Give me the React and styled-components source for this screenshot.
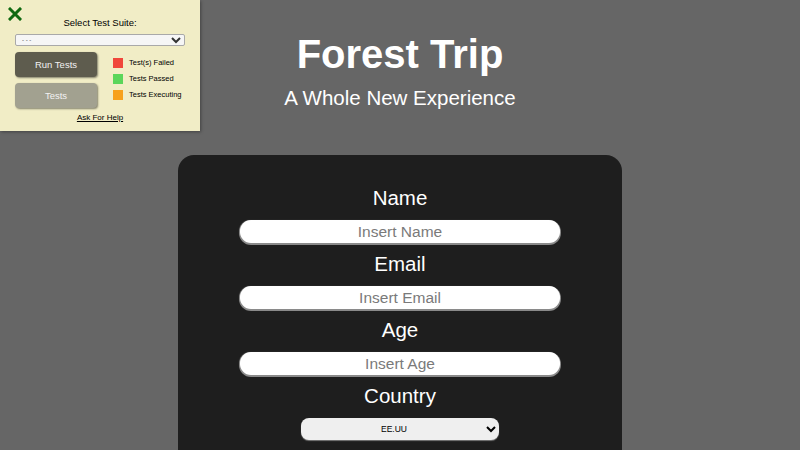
import React from 'react';
import styled, { createGlobalStyle } from 'styled-components';

const GlobalStyle = createGlobalStyle`
    html, body {
        margin: 0;
        padding: 0;
        background: #666666;
        font-family: "Liberation Sans", Arial, sans-serif;
    }
`

const fields = [
    { label: 'Name', placeholder: 'Insert Name' },
    { label: 'Email', placeholder: 'Insert Email' },
    { label: 'Age', placeholder: 'Insert Age' },
]

const legend = [
    { color: '#f0473b', text: 'Test(s) Failed' },
    { color: '#5bd65a', text: 'Tests Passed' },
    { color: '#f7a11c', text: 'Tests Executing' },
]

export default function App() {
    return (
        <Page>
            <GlobalStyle />
            <Header>
                <Title>Forest Trip</Title>
                <Subtitle>A Whole New Experience</Subtitle>
            </Header>

            <FormCard>
                {fields.map((f) => (
                    <Field key={f.label}>
                        <Label>{f.label}</Label>
                        <TextInput placeholder={f.placeholder} />
                    </Field>
                ))}
                <Field>
                    <Label>Country</Label>
                    <CountrySelect defaultValue="EE.UU">
                        <option>EE.UU</option>
                    </CountrySelect>
                </Field>
            </FormCard>

            <TestPanel>
                <CloseButton aria-label="close">
                    <svg width="14" height="14" viewBox="0 0 14 14">
                        <path d="M2 2 L12 12 M12 2 L2 12" stroke="#106a10" strokeWidth="3" strokeLinecap="square" />
                    </svg>
                </CloseButton>
                <PanelHeading>Select Test Suite:</PanelHeading>
                <SuiteSelect defaultValue="- - -">
                    <option>- - -</option>
                </SuiteSelect>
                <PanelBody>
                    <ButtonColumn>
                        <PanelButton dark>Run Tests</PanelButton>
                        <PanelButton>Tests</PanelButton>
                    </ButtonColumn>
                    <Legend>
                        {legend.map((l) => (
                            <LegendRow key={l.text}>
                                <Swatch color={l.color} />
                                {l.text}
                            </LegendRow>
                        ))}
                    </Legend>
                </PanelBody>
                <HelpLink href="#">Ask For Help</HelpLink>
            </TestPanel>
        </Page>
    )
}

const Page = styled.div`
    position: relative;
    height: 450px;
    overflow: hidden;
`

const Header = styled.header`
    display: flex;
    flex-direction: column;
    align-items: center;
    padding-top: 31px;
    color: #ffffff;
`

const Title = styled.h1`
    margin: 0;
    font-size: 40px;
    font-weight: bold;
    line-height: 46px;
`

const Subtitle = styled.p`
    margin: 9px 0 0;
    font-size: 20.5px;
    line-height: 23px;
`

const FormCard = styled.main`
    width: 444px;
    margin: 46px auto 0;
    box-sizing: border-box;
    padding: 31px 0 40px;
    background: #1e1e1e;
    border-radius: 16px;
    display: flex;
    flex-direction: column;
    align-items: center;
    gap: 9px;
`

const Field = styled.div`
    display: flex;
    flex-direction: column;
    align-items: center;
    gap: 11px;
`

const Label = styled.label`
    color: #ffffff;
    font-size: 20.5px;
    line-height: 23px;
`

const TextInput = styled.input`
    width: 320px;
    height: 23px;
    box-sizing: border-box;
    border: none;
    border-radius: 11px;
    background: #ffffff;
    box-shadow: 0 1px 0 1px #8a8a8a, -1px 0 1px #555;
    text-align: center;
    font-family: "Liberation Sans", Arial, sans-serif;
    font-size: 15.5px;
    color: #333;
    outline: none;

    &::placeholder {
        color: #7a7a7a;
    }
`

const CountrySelect = styled.select`
    width: 198px;
    height: 22px;
    border: none;
    border-radius: 8px;
    background: #efefef;
    box-shadow: 0 1px 1px #777;
    text-align: center;
    text-align-last: center;
    font-family: "Liberation Sans", Arial, sans-serif;
    font-size: 8.5px;
    color: #000;
`

const TestPanel = styled.aside`
    position: absolute;
    top: 0;
    left: 0;
    width: 200px;
    height: 131px;
    box-sizing: border-box;
    padding: 16px 15px 0 15px;
    background: #f1edc6;
    box-shadow: 1px 1px 3px rgba(0, 0, 0, 0.35);
    display: flex;
    flex-direction: column;
    font-family: "Liberation Sans", Arial, sans-serif;
    color: #000;
`

const CloseButton = styled.button`
    position: absolute;
    top: 7px;
    left: 8px;
    padding: 0;
    border: none;
    background: none;
    line-height: 0;
    cursor: pointer;
`

const PanelHeading = styled.div`
    text-align: center;
    font-size: 9.5px;
    line-height: 14px;
`

const SuiteSelect = styled.select`
    margin-top: 4px;
    width: 170px;
    height: 12px;
    padding: 0 2px;
    box-sizing: border-box;
    border: 1px solid #a9a9a9;
    border-radius: 2px;
    background: #f6f6f6;
    font-size: 6px;
    color: #333;
`

const PanelBody = styled.div`
    display: flex;
    gap: 16px;
    margin-top: 6px;
`

const ButtonColumn = styled.div`
    display: flex;
    flex-direction: column;
    gap: 6px;
`

const PanelButton = styled.button`
    width: 82px;
    height: 25px;
    border: none;
    border-radius: 4px;
    background: ${(p) => (p.dark ? '#5e5c4e' : '#a2a190')};
    box-shadow: 1px 1px 2px rgba(0, 0, 0, 0.45);
    color: #f2f2f2;
    font-family: "Liberation Sans", Arial, sans-serif;
    font-size: 9.5px;
    cursor: pointer;
`

const Legend = styled.div`
    display: flex;
    flex-direction: column;
    gap: 5px;
    padding-top: 5px;
`

const LegendRow = styled.div`
    display: flex;
    align-items: center;
    gap: 6px;
    font-size: 7.5px;
    line-height: 11px;
    white-space: nowrap;
`

const Swatch = styled.span`
    flex: none;
    width: 10px;
    height: 10px;
    background: ${(p) => p.color};
`

const HelpLink = styled.a`
    align-self: center;
    margin-top: 5px;
    font-size: 8px;
    color: #000;
    text-decoration: underline;
`
